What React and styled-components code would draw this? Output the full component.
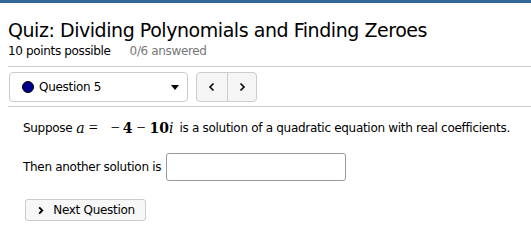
import React from "react";
import styled, { createGlobalStyle } from "styled-components";

const GlobalStyle = createGlobalStyle`
  body {
    margin: 0;
    background: #fff;
    font-family: "DejaVu Sans", Verdana, sans-serif;
    color: #000;
  }
`;

const TopBar = styled.div`
  height: 3px;
  background: #336699;
`;

const Page = styled.div`
  padding: 0 0 0 8px;
`;

const Header = styled.header`
  padding-top: 14px;
  padding-bottom: 6px;
  border-bottom: 1px solid #ccc;
`;

const Title = styled.h1`
  margin: 0;
  font-size: 19px;
  font-weight: 500;
  line-height: 26px;
  letter-spacing: -0.45px;
`;

const Meta = styled.div`
  display: flex;
  gap: 19px;
  font-size: 12px;
  line-height: 17px;
  letter-spacing: -0.35px;
`;

const Muted = styled.span`
  color: #777;
`;

const Toolbar = styled.div`
  display: flex;
  align-items: center;
  gap: 8px;
  padding: 5px 0 4px 1px;
  border-bottom: 1px solid #ccc;
`;

const Select = styled.div`
  width: 179px;
  height: 30px;
  box-sizing: border-box;
  border: 1px solid #ccc;
  border-radius: 4px;
  display: flex;
  align-items: center;
  padding: 0 8px 0 12px;
  font-size: 12px;
  letter-spacing: -0.3px;
`;

const Dot = styled.span`
  width: 10px;
  height: 10px;
  border-radius: 50%;
  background: #00008b;
  border: 1px solid #000;
  margin-right: 5px;
`;

const Caret = styled.span`
  margin-left: auto;
  width: 0;
  height: 0;
  border-left: 4px solid transparent;
  border-right: 4px solid transparent;
  border-top: 5px solid #000;
`;

const NavGroup = styled.div`
  display: flex;
  height: 30px;
  box-sizing: border-box;
  border: 1px solid #ccc;
  border-radius: 4px;
  background: #f5f5f5;
  overflow: hidden;
`;

const NavButton = styled.button`
  width: ${(p) => p.$w}px;
  border: 0;
  border-left: ${(p) => (p.$divider ? "1px solid #ccc" : "0")};
  background: transparent;
  padding: 0;
  display: flex;
  align-items: center;
  justify-content: center;
  cursor: pointer;
`;

const Body = styled.div`
  padding: 12px 0 0 15px;
  font-size: 12px;
  letter-spacing: -0.3px;
`;

const Line = styled.p`
  margin: 0 0 ${(p) => p.$mb}px;
  display: flex;
  align-items: center;
  line-height: 18px;
  white-space: nowrap;
`;

const Math = styled.span`
  display: inline-flex;
  align-items: baseline;
  font-family: "DejaVu Serif", "Liberation Serif", serif;
  font-size: 14px;
  letter-spacing: 0;
  margin: 0 6px 0 4px;
`;

const Var = styled.i`
  font-style: italic;
`;

const Num = styled.b`
  font-weight: bold;
`;

const Op = styled.span`
  font-family: "Liberation Serif", serif;
  font-size: 16px;
  margin: 0 ${(p) => p.$r}px 0 ${(p) => p.$l}px;
`;

const Answer = styled.input`
  width: 180px;
  height: 28px;
  box-sizing: border-box;
  margin-left: 5px;
  border: 1px solid #999;
  border-radius: 3px;
`;

const NextButton = styled.button`
  margin-left: 2px;
  width: 121px;
  height: 22px;
  box-sizing: border-box;
  border: 1px solid #ccc;
  border-radius: 3px;
  background: #f7f7f7;
  font-family: inherit;
  font-size: 12px;
  letter-spacing: -0.3px;
  display: flex;
  align-items: center;
  justify-content: center;
  gap: 8px;
  color: #000;
`;

const Chevron = ({ dir = "right", size = 10, w = 1.6 }) => (
  <svg width={size} height={size} viewBox="0 0 10 10">
    <path
      d={dir === "right" ? "M3.5 1.5 L7 5 L3.5 8.5" : "M6.5 1.5 L3 5 L6.5 8.5"}
      fill="none"
      stroke="#000"
      strokeWidth={w}
    />
  </svg>
);

export default function App() {
  return (
    <>
      <GlobalStyle />
      <TopBar />
      <Page>
        <Header>
          <Title>Quiz: Dividing Polynomials and Finding Zeroes</Title>
          <Meta>
            <span>10 points possible</span>
            <Muted>0/6 answered</Muted>
          </Meta>
        </Header>
        <Toolbar>
          <Select>
            <Dot />
            Question 5
            <Caret />
          </Select>
          <NavGroup>
            <NavButton $w={30} aria-label="Previous">
              <Chevron dir="left" />
            </NavButton>
            <NavButton $w={29} $divider aria-label="Next">
              <Chevron dir="right" />
            </NavButton>
          </NavGroup>
        </Toolbar>
        <Body>
          <Line $mb={16}>
            Suppose
            <Math>
              <Var>a</Var>
              <Op $l={4} $r={13}>=</Op>
              <Op $l={0} $r={3}>−</Op>
              <Num>4</Num>
              <Op $l={4} $r={4}>−</Op>
              <Num>10</Num>
              <Var>i</Var>
            </Math>
            is a solution of a quadratic equation with real coefficients.
          </Line>
          <Line $mb={18}>
            Then another solution is
            <Answer type="text" />
          </Line>
          <NextButton>
            <Chevron dir="right" size={9} w={2} />
            Next Question
          </NextButton>
        </Body>
      </Page>
    </>
  );
}
